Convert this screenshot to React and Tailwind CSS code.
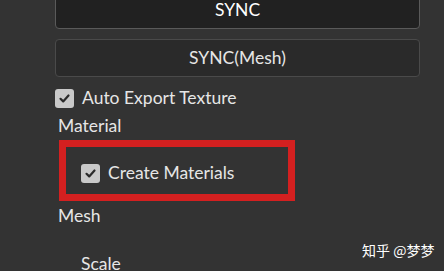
export default function App() {
  const Check = () => (
    <div className="w-[19px] h-[19px] rounded-[3px] bg-[#c9c9c9] flex items-center justify-center shrink-0">
      <svg width="13" height="13" viewBox="0 0 13 13" fill="none">
        <path d="M2.5 6.8 L5.2 9.4 L10.5 3.5" stroke="#2a2a2a" strokeWidth="2.2" strokeLinecap="round" strokeLinejoin="round" />
      </svg>
    </div>
  );
  return (
    <div className="w-[444px] h-[271px] overflow-hidden bg-[#333333] text-[#e6e6e6] font-['Lato','Noto_Sans',sans-serif] text-[17.5px] relative">
      <div className="pl-[55px] pr-[24px] flex flex-col">
        <div className="mt-[-9px] h-[38px] shrink-0 rounded-[4px] border border-[#5a5a5a] bg-[#212121] flex items-center justify-center text-white">SYNC</div>
        <div className="mt-[10px] h-[38px] shrink-0 rounded-[4px] border border-[#4a4a4a] bg-[#2a2a2a] flex items-center justify-center">SYNC(Mesh)</div>
        <div className="mt-[11px] h-[20px] shrink-0 flex items-center gap-[8px]">
          <Check />
          <span>Auto Export Texture</span>
        </div>
        <div className="mt-[8px] h-[20px] shrink-0 flex items-center pl-[3px]">Material</div>
        <div className="mt-[4px] ml-[4px] w-[236px] h-[61px] shrink-0 border-[7px] border-[#d42020] flex items-center pl-[15px] pt-[6px] gap-[8px]">
          <Check />
          <span>Create Materials</span>
        </div>
        <div className="mt-[5px] h-[20px] shrink-0 flex items-center pl-[3px]">Mesh</div>
        <div className="mt-[28px] h-[20px] shrink-0 flex items-center pl-[26px]">Scale</div>
      </div>
      <div className="absolute left-[362px] top-[240px] text-white text-[14px] font-['Noto_Sans_CJK_SC',sans-serif]">知乎 @梦梦</div>
    </div>
  );
}
